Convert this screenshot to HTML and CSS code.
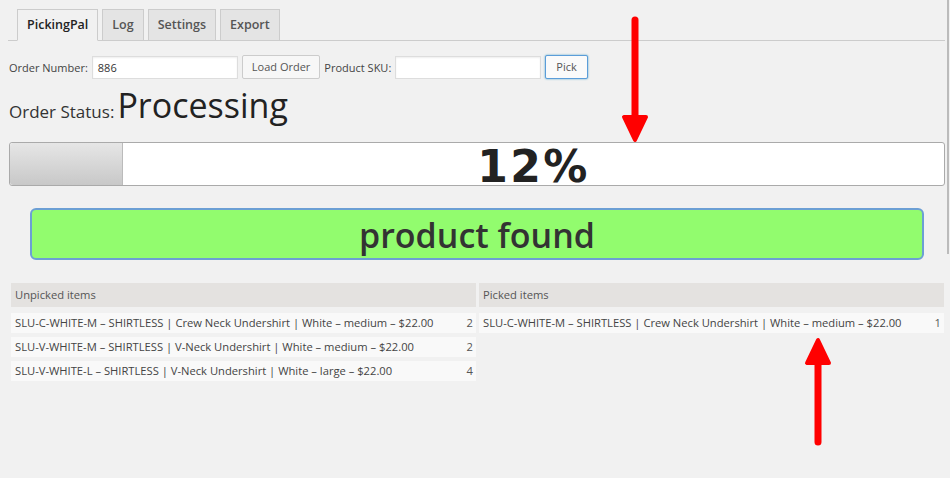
FILE: index.html
```html
<!DOCTYPE html>
<html>
<head>
<meta charset="utf-8">
<link rel="stylesheet" href="styles.css">
</head>
<body>
<div class="wrap">
  <div class="tabs">
    <span class="tab active">PickingPal</span>
    <span class="tab">Log</span>
    <span class="tab">Settings</span>
    <span class="tab">Export</span>
  </div>
  <div class="form-row">
    <label class="lbl">Order Number:</label>
    <span class="input">886</span>
    <span class="btn">Load Order</span>
    <label class="lbl">Product SKU:</label>
    <span class="input"></span>
    <span class="btn focus">Pick</span>
  </div>
  <div class="status">
    <span class="status-label">Order Status:</span>
    <span class="status-value">Processing</span>
  </div>
  <div class="progress">
    <div class="progress-fill" style="width:12%"></div>
    <div class="progress-rest">12%</div>
  </div>
  <div class="message">product found</div>
  <div class="lists">
    <div class="list">
      <div class="list-head">Unpicked items</div>
      <div class="item"><span>SLU-C-WHITE-M – SHIRTLESS | Crew Neck Undershirt | White – medium – $22.00</span><span class="qty">2</span></div>
      <div class="item"><span>SLU-V-WHITE-M – SHIRTLESS | V-Neck Undershirt | White – medium – $22.00</span><span class="qty">2</span></div>
      <div class="item"><span>SLU-V-WHITE-L – SHIRTLESS | V-Neck Undershirt | White – large – $22.00</span><span class="qty">4</span></div>
    </div>
    <div class="list">
      <div class="list-head">Picked items</div>
      <div class="item"><span>SLU-C-WHITE-M – SHIRTLESS | Crew Neck Undershirt | White – medium – $22.00</span><span class="qty">1</span></div>
    </div>
  </div>
</div>
<div class="scroll-edge"></div>
<svg class="arrow arrow-down" width="30" height="130" viewBox="0 0 30 130">
  <line x1="15" y1="4" x2="15" y2="108" stroke="#f00" stroke-width="7" stroke-linecap="round"/>
  <path d="M4 101 L26 101 L15 124 Z" fill="#f00" stroke="#f00" stroke-width="4" stroke-linejoin="round"/>
</svg>
<svg class="arrow arrow-up" width="30" height="112" viewBox="0 0 30 112">
  <line x1="15" y1="22" x2="15" y2="106" stroke="#f00" stroke-width="7" stroke-linecap="round"/>
  <path d="M4 27 L26 27 L15 4 Z" fill="#f00" stroke="#f00" stroke-width="4" stroke-linejoin="round"/>
</svg>
</body>
</html>
```

FILE: styles.css
```css
html, body {
  margin: 0;
  padding: 0;
  background: #f1f1f1;
  font-family: "Open Sans", "Liberation Sans", sans-serif;
  color: #444;
  width: 950px;
  height: 478px;
  overflow: hidden;
  position: relative;
}
.wrap {
  padding: 8px 5px 0 8px;
}
.tabs {
  display: flex;
  gap: 4px;
  padding-left: 9px;
  border-bottom: 1px solid #ccc;
  height: 32px;
  align-items: flex-end;
}
.tab {
  box-sizing: border-box;
  height: 32px;
  margin-bottom: -1px;
  padding: 0 9px;
  border: 1px solid #ccc;
  background: #e4e4e4;
  color: #555;
  font-size: 12.5px;
  font-weight: 600;
  line-height: 30px;
}
.tab.active {
  background: #f1f1f1;
  border-bottom-color: #f1f1f1;
  color: #222;
}
.form-row {
  display: flex;
  align-items: center;
  gap: 4px;
  margin-top: 14px;
  padding-left: 1px;
  font-size: 11px;
}
.lbl {
  color: #444;
}
.input {
  box-sizing: border-box;
  width: 146px;
  height: 23px;
  background: #fff;
  border: 1px solid #ddd;
  box-shadow: inset 0 1px 2px rgba(0,0,0,.07);
  padding: 0 5px;
  line-height: 21px;
  color: #333;
}
.btn {
  box-sizing: border-box;
  height: 24px;
  padding: 0 9px;
  border: 1px solid #ccc;
  border-radius: 2px;
  background: #f7f7f7;
  color: #555;
  line-height: 22px;
}
.btn.focus {
  padding: 0 10px;
  border-color: #5b9dd9;
  box-shadow: 0 0 2px rgba(30,140,190,.8);
  background: #fafafa;
}
.status {
  display: flex;
  align-items: baseline;
  gap: 3px;
  padding-left: 1px;
  margin-top: 3px;
  height: 42px;
}
.status-label {
  font-size: 17px;
  color: #333;
}
.status-value {
  font-size: 34px;
  color: #222;
}
.progress {
  display: flex;
  box-sizing: border-box;
  margin-top: 18px;
  margin-left: 1px;
  width: 936px;
  height: 44px;
  border: 1px solid #aaa;
  border-radius: 3px;
  background: #fff;
}
.progress-fill {
  background: linear-gradient(#e6e6e6, #c8c8c8);
  border-right: 1px solid #bbb;
  border-radius: 3px 0 0 3px;
}
.progress-rest {
  flex: 1;
  display: flex;
  align-items: center;
  justify-content: center;
  font-family: "DejaVu Sans", sans-serif;
  font-weight: bold;
  font-size: 44px;
  letter-spacing: 2.5px;
  line-height: 1;
  padding-top: 6px;
  color: #222;
}
.message {
  box-sizing: border-box;
  margin: 22px 0 0 22px;
  width: 894px;
  height: 52px;
  border: 2px solid #6c9fd4;
  border-radius: 6px;
  background: #92fc6e;
  color: #333;
  text-align: center;
  font-size: 34px;
  font-weight: 600;
  line-height: 50px;
}
.lists {
  display: flex;
  gap: 3px;
  margin: 23px 0 0 3px;
}
.list {
  width: 465px;
  font-size: 11.2px;
  color: #444;
}
.list-head {
  height: 24px;
  line-height: 24px;
  background: #e4e2e0;
  padding-left: 4px;
  color: #555;
  margin-bottom: 6px;
}
.item {
  display: flex;
  justify-content: space-between;
  height: 20px;
  line-height: 20px;
  background: #f9f9f9;
  padding: 0 3px 0 4px;
  margin-bottom: 4px;
}
.qty {
  color: #555;
}
.scroll-edge {
  position: absolute;
  left: 947px;
  top: 0;
  width: 2px;
  height: 254px;
  background: #bbb;
}
.arrow {
  position: absolute;
}
.arrow-down {
  left: 620px;
  top: 16px;
}
.arrow-up {
  left: 803px;
  top: 336px;
}
```
